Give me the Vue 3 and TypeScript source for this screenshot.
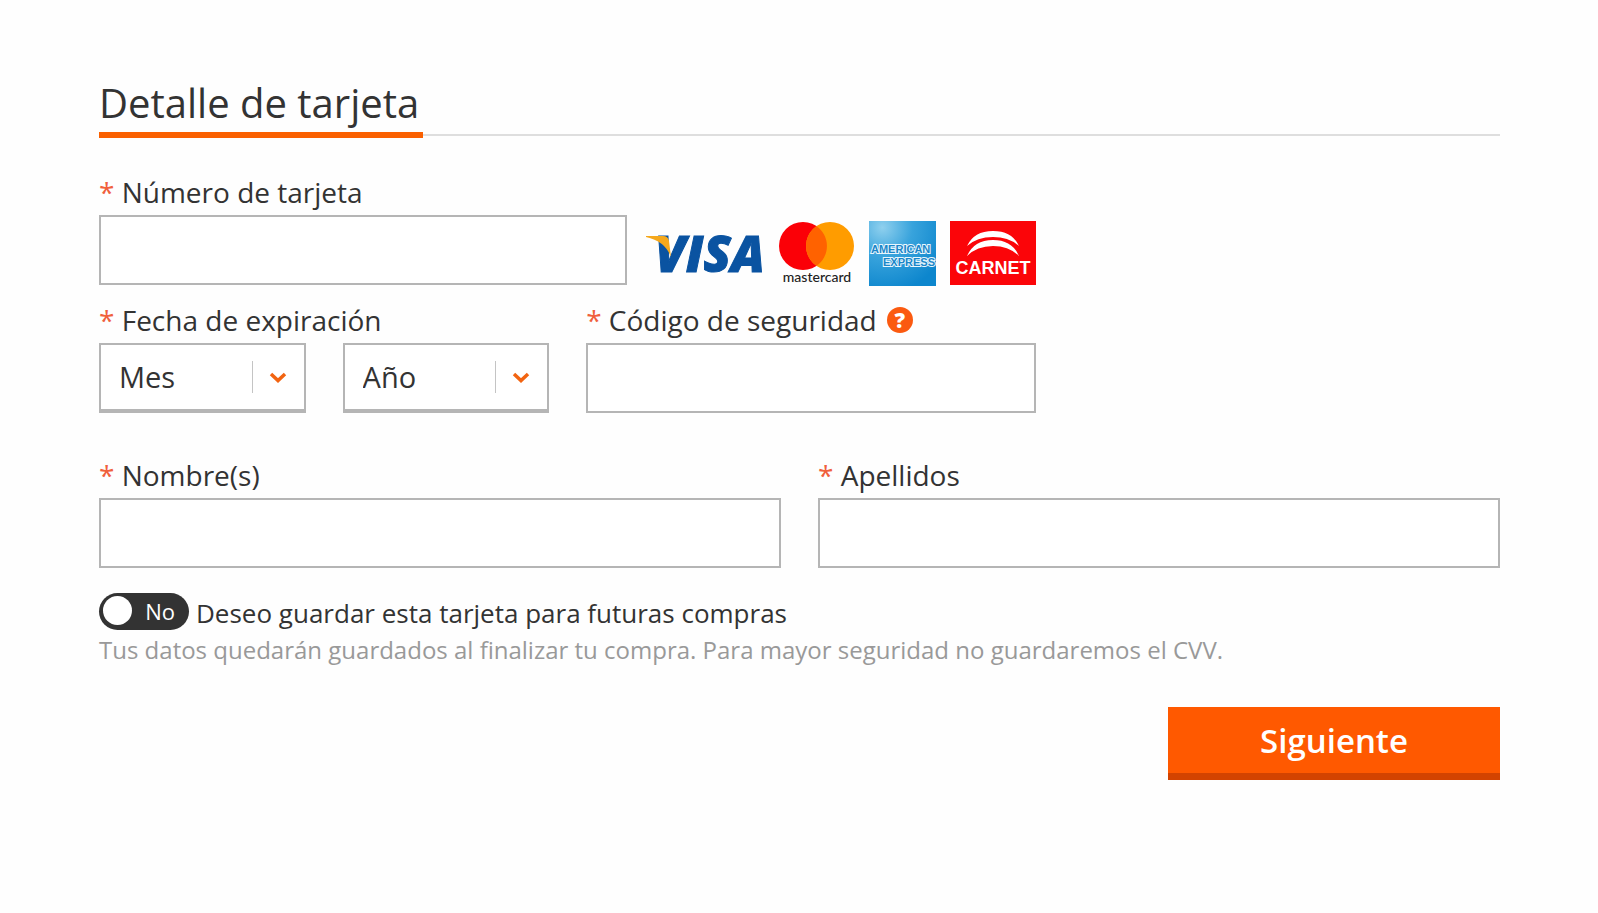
<script setup lang="ts">
import { ref } from 'vue'

const cardNumber = ref('')
const month = ref('')
const year = ref('')
const securityCode = ref('')
const firstName = ref('')
const lastName = ref('')
const saveCard = ref(false)

const months: string[] = Array.from({ length: 12 }, (_, i) => String(i + 1).padStart(2, '0'))
const years: number[] = Array.from({ length: 10 }, (_, i) => 2024 + i)
</script>

<template>
  <form class="card-form" @submit.prevent>
    <header class="heading">
      <h1 class="title">Detalle de tarjeta</h1>
      <span class="rule"></span>
    </header>

    <div class="narrow">
      <div class="field">
        <label class="label" for="card-number"><span class="star">*</span> Número de tarjeta</label>
        <div class="number-row">
          <input id="card-number" v-model="cardNumber" class="box number" type="text" inputmode="numeric" />
          <div class="brands">
            <svg width="119" height="71" viewBox="0 0 119 71" role="img" aria-label="Visa">
              <text x="9" y="57" class="visa">VISA</text>
              <path d="M0 21 H17 Q22 21 23 26 L25 42 Q19 26 0 22 Z" fill="#f5a81c" />
            </svg>
            <svg width="76" height="71" viewBox="0 0 76 71" role="img" aria-label="Mastercard">
              <circle cx="24" cy="31" r="24" fill="#fb0007" />
              <circle cx="51" cy="31" r="24" fill="#ff9c00" />
              <path d="M37.500 11.200 A24 24 0 0 1 37.500 50.800 A24 24 0 0 1 37.500 11.200 Z" fill="#ff6200" />
              <text x="38" y="67" text-anchor="middle" class="mastercard">mastercard</text>
            </svg>
            <svg width="67" height="71" viewBox="0 0 67 71" role="img" aria-label="American Express">
              <defs>
                <radialGradient id="amex-blue" cx="0.2" cy="0.1" r="1">
                  <stop offset="0" stop-color="#8fd0ee" />
                  <stop offset="0.45" stop-color="#38a3dc" />
                  <stop offset="1" stop-color="#0d86cd" />
                </radialGradient>
              </defs>
              <rect y="6" width="67" height="65" fill="url(#amex-blue)" />
              <text x="2" y="38" class="amex">AMERICAN</text>
              <text x="14" y="51" class="amex">EXPRESS</text>
            </svg>
            <svg width="86" height="71" viewBox="0 0 86 71" role="img" aria-label="Carnet">
              <rect y="6" width="86" height="64" fill="#fb0509" />
              <path d="M17 31 Q24 16 43 16 Q62 16 69 31 Q59 22 43 22 Q27 22 17 31 Z" fill="#fff" />
              <path d="M17 41 Q24 25 43 25 Q62 25 69 41 Q59 31 43 31 Q27 31 17 41 Z" fill="#fff" />
              <text x="43" y="59" text-anchor="middle" class="carnet">CARNET</text>
            </svg>
          </div>
        </div>
      </div>

      <div class="details">
        <fieldset class="expiry">
          <legend class="label"><span class="star">*</span> Fecha de expiración</legend>
          <div class="selects">
            <div class="picker">
              <select v-model="month" class="box" aria-label="Mes">
                <option value="">Mes</option>
                <option v-for="m in months" :key="m" :value="m">{{ m }}</option>
              </select>
              <svg class="arrow" width="40" height="32" viewBox="0 0 40 32" aria-hidden="true">
                <path d="M0.500 0 V32" stroke="#c4c4c4" />
                <path d="M19 13 L26 19.500 L33 13" fill="none" stroke="#f26411" stroke-width="3.500" />
              </svg>
            </div>
            <div class="picker">
              <select v-model="year" class="box" aria-label="Año">
                <option value="">Año</option>
                <option v-for="y in years" :key="y" :value="y">{{ y }}</option>
              </select>
              <svg class="arrow" width="40" height="32" viewBox="0 0 40 32" aria-hidden="true">
                <path d="M0.500 0 V32" stroke="#c4c4c4" />
                <path d="M19 13 L26 19.500 L33 13" fill="none" stroke="#f26411" stroke-width="3.500" />
              </svg>
            </div>
          </div>
        </fieldset>
        <div class="field">
          <div class="label-row">
            <label class="label" for="cvv"><span class="star">*</span> Código de seguridad</label>
            <button class="help" type="button" aria-label="Ayuda">?</button>
          </div>
          <input id="cvv" v-model="securityCode" class="box" type="text" inputmode="numeric" />
        </div>
      </div>
    </div>

    <div class="names">
      <div class="field">
        <label class="label" for="first-name"><span class="star">*</span> Nombre(s)</label>
        <input id="first-name" v-model="firstName" class="box" type="text" />
      </div>
      <div class="field">
        <label class="label" for="last-name"><span class="star">*</span> Apellidos</label>
        <input id="last-name" v-model="lastName" class="box" type="text" />
      </div>
    </div>

    <label class="save">
      <span class="toggle" :class="{ on: saveCard }">
        <input v-model="saveCard" class="switch" type="checkbox" />
        <span class="knob"></span>
        <span class="state">{{ saveCard ? 'Sí' : 'No' }}</span>
      </span>
      <span>Deseo guardar esta tarjeta para futuras compras</span>
    </label>
    <p class="note">Tus datos quedarán guardados al finalizar tu compra. Para mayor seguridad no guardaremos el CVV.</p>

    <button class="next" type="submit">Siguiente</button>
  </form>
</template>

<style>
body {
  background: #fefefe;
}
</style>

<style scoped>
.card-form {
  display: flex;
  flex-direction: column;
  box-sizing: border-box;
  padding: 75px 98px 64px 99px;
  font-family: 'Open Sans', 'Noto Sans', sans-serif;
  font-size: 28px;
  line-height: 36px;
  color: #333;
}
.heading {
  display: flex;
  align-items: flex-end;
  margin-bottom: 36px;
}
.title {
  margin: 0;
  padding: 0 4px 1px 0;
  border-bottom: 6px solid #fa6000;
  font-size: 40px;
  font-weight: 400;
  line-height: 56px;
}
.rule {
  flex: 1;
  height: 2px;
  margin-bottom: 2px;
  background: #dedede;
}
.narrow {
  display: flex;
  flex-direction: column;
  gap: 16px;
  width: 66.9%;
}
.field {
  display: flex;
  flex-direction: column;
  gap: 5px;
  min-width: 0;
}
.label {
  display: block;
  padding: 0;
}
.star {
  color: #f0603c;
}
.box {
  box-sizing: border-box;
  width: 100%;
  height: 70px;
  margin: 0;
  padding: 0 18px;
  border: 2px solid #b5b5b5;
  border-radius: 0;
  background: #fff;
  font: inherit;
  color: inherit;
  outline: none;
}
.box:focus {
  border-color: #fa6000;
}
.number-row {
  display: flex;
  justify-content: space-between;
  gap: 19px;
}
.number {
  flex: 1;
  min-width: 0;
}
.brands {
  display: flex;
  gap: 14px;
}
.visa {
  font: italic 800 50px 'Open Sans', sans-serif;
  fill: #0a53a1;
  stroke: #0a53a1;
  stroke-width: 1px;
}
.mastercard {
  font: 500 14px 'Lato', sans-serif;
  fill: #222;
}
.amex {
  font: 700 11px 'Liberation Sans', sans-serif;
  fill: #1b86c8;
  stroke: #e8f6fd;
  stroke-width: 2px;
  paint-order: stroke;
}
.carnet {
  font: 700 18px 'Liberation Sans', sans-serif;
  fill: #fff;
}
.details {
  display: grid;
  grid-template-columns: 1fr 1fr;
  gap: 37px;
}
.expiry {
  display: flex;
  flex-direction: column;
  min-width: 0;
  margin: 0;
  padding: 0;
  border: 0;
}
.expiry .label {
  margin-bottom: 5px;
}
.selects {
  display: grid;
  grid-template-columns: 1fr 1fr;
  gap: 37px;
}
.picker {
  position: relative;
}
.picker .box {
  appearance: none;
  border-bottom-width: 4px;
  font-size: 29px;
}
.arrow {
  position: absolute;
  top: 18px;
  right: 14px;
  pointer-events: none;
}
.label-row {
  display: flex;
  align-items: center;
  gap: 10px;
}
.help {
  width: 26px;
  height: 26px;
  padding: 0;
  border: 0;
  border-radius: 50%;
  background: #fb5a10;
  color: #fff;
  font: 800 21px/26px 'Open Sans', sans-serif;
}
.names {
  display: grid;
  grid-template-columns: 1fr 1fr;
  gap: 37px;
  margin: 44px 0 25px;
}
.save {
  display: flex;
  gap: 7px;
  align-self: flex-start;
  font-size: 26px;
  line-height: 40px;
}
.toggle {
  display: flex;
  align-items: center;
  justify-content: space-between;
  position: relative;
  box-sizing: border-box;
  width: 90px;
  height: 37px;
  padding: 3px 14px 5px 4px;
  border-radius: 19px;
  background: #333;
  color: #fff;
}
.toggle.on {
  flex-direction: row-reverse;
  padding: 3px 4px 5px 14px;
  background: #fa6000;
}
.switch {
  position: absolute;
  inset: 0;
  width: 100%;
  height: 100%;
  margin: 0;
  opacity: 0;
  cursor: pointer;
}
.knob {
  width: 29px;
  height: 29px;
  border-radius: 50%;
  background: #fff;
}
.state {
  font-size: 22px;
  font-weight: 500;
}
.note {
  margin: 0 0 40px;
  font-size: 24px;
  line-height: 34px;
  color: #999;
}
.next {
  align-self: flex-end;
  box-sizing: border-box;
  width: 332px;
  height: 73px;
  padding: 0;
  border: 0;
  border-bottom: 7px solid #d34300;
  background: #ff5900;
  color: #fff;
  font: 600 33px 'Open Sans', 'Noto Sans', sans-serif;
  cursor: pointer;
}
</style>
